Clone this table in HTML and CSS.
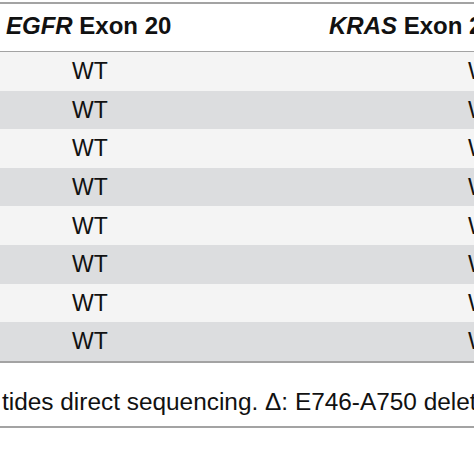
FILE: index.html
```html
<!DOCTYPE html>
<html>
<head>
<meta charset="utf-8">
<link rel="stylesheet" href="styles.css">
</head>
<body>
<div class="page">
  <div class="rule first"></div>
  <div class="row head">
    <div class="c1"><i>EGFR</i> Exon 20</div>
    <div class="c2"><i>KRAS</i> Exon 20</div>
  </div>
  <div class="rule"></div>
  <div class="body">
    <div class="row data light"><div class="c1">WT</div><div class="c2">WT</div></div>
    <div class="row data dark"><div class="c1">WT</div><div class="c2">WT</div></div>
    <div class="row data light"><div class="c1">WT</div><div class="c2">WT</div></div>
    <div class="row data dark"><div class="c1">WT</div><div class="c2">WT</div></div>
    <div class="row data light"><div class="c1">WT</div><div class="c2">WT</div></div>
    <div class="row data dark"><div class="c1">WT</div><div class="c2">WT</div></div>
    <div class="row data light"><div class="c1">WT</div><div class="c2">WT</div></div>
    <div class="row data dark"><div class="c1">WT</div><div class="c2">WT</div></div>
  </div>
  <div class="rule"></div>
  <div class="foot">tides direct sequencing. Δ: E746-A750 deletion</div>
  <div class="rule"></div>
</div>
</body>
</html>
```
FILE: styles.css
```css
html, body {
  margin: 0;
  padding: 0;
  background: #ffffff;
  overflow: hidden;
}
.page {
  width: 474px;
  overflow: hidden;
  font-family: "Liberation Sans", Arial, Helvetica, sans-serif;
  color: #111111;
}
.rule {
  height: 2px;
  background: #a3a3a3;
  width: 100%;
}
.rule.first {
  margin-top: 2px;
}
.row {
  display: flex;
  white-space: nowrap;
}
.head {
  height: 47px;
  align-items: center;
  font-weight: bold;
  font-size: 24px;
  padding-bottom: 4px;
  box-sizing: border-box;
}
.head .c1 {
  width: 329px;
  flex: none;
  padding-left: 6px;
  box-sizing: border-box;
}
.head .c2 {
  flex: none;
}
.data {
  height: 38.6px;
  align-items: center;
  font-size: 23px;
  padding-top: 1px;
  box-sizing: border-box;
}
.data .c1 {
  width: 468px;
  flex: none;
  padding-left: 72px;
  box-sizing: border-box;
}
.data .c2 {
  flex: none;
}
.light { background: #f4f4f4; }
.dark { background: #dcdddf; }
.body {
  margin-top: -1px;
}
.foot {
  height: 63px;
  display: flex;
  align-items: center;
  padding-left: 2px;
  padding-top: 16px;
  box-sizing: border-box;
  font-size: 24.4px;
  white-space: nowrap;
}
```
